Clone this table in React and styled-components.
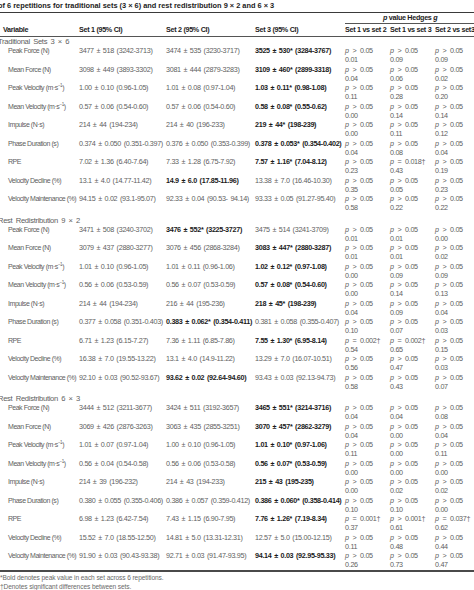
import React from "react";
import styled, { createGlobalStyle } from "styled-components";

const SANS = `"Liberation Sans Narrow", "Arial Narrow", "Liberation Sans", Arial, sans-serif`;

const GlobalStyle = createGlobalStyle`
  html, body {
    margin: 0;
    padding: 0;
    background: #ffffff;
  }
  body {
    width: 474px;
    height: 590px;
    overflow: hidden;
  }
`;

const LABELS = [
  "Peak Force (N)",
  "Mean Force (N)",
  <>
    Peak Velocity (m·s<sup>−1</sup>)
  </>,
  <>
    Mean Velocity (m·s<sup>−1</sup>)
  </>,
  "Impulse (N·s)",
  "Phase Duration (s)",
  "RPE",
  "Velocity Decline (%)",
  "Velocity Maintenance (%)",
];

const NS = "> 0.05";

// each row: sets, index of bold set (-1 none), p values, hedges g
const GROUPS = [
  {
    title: "Traditional Sets 3 × 6",
    first: true,
    rows: [
      { sets: ["3477 ± 518 (3242-3713)", "3474 ± 535 (3230-3717)", "3525 ± 530* (3284-3767)"], bold: 2, g: ["0.01", "0.09", "0.09"] },
      { sets: ["3098 ± 449 (3893-3302)", "3081 ± 444 (2879-3283)", "3109 ± 460* (2899-3318)"], bold: 2, g: ["0.04", "0.06", "0.02"] },
      { sets: ["1.00 ± 0.10 (0.96-1.05)", "1.01 ± 0.08 (0.97-1.04)", "1.03 ± 0.11* (0.98-1.08)"], bold: 2, g: ["0.11", "0.28", "0.20"] },
      { sets: ["0.57 ± 0.06 (0.54-0.60)", "0.57 ± 0.06 (0.54-0.60)", "0.58 ± 0.08* (0.55-0.62)"], bold: 2, g: ["0.00", "0.14", "0.14"] },
      { sets: ["214 ± 44 (194-234)", "214 ± 40 (196-233)", "219 ± 44* (198-239)"], bold: 2, g: ["0.00", "0.11", "0.12"] },
      { sets: ["0.374 ± 0.050 (0.351-0.397)", "0.376 ± 0.050 (0.353-0.399)", "0.378 ± 0.053* (0.354-0.402)"], bold: 2, g: ["0.04", "0.08", "0.04"] },
      { sets: ["7.02 ± 1.36 (6.40-7.64)", "7.33 ± 1.28 (6.75-7.92)", "7.57 ± 1.16* (7.04-8.12)"], bold: 2, p: [NS, "= 0.018†", NS], g: ["0.23", "0.43", "0.19"] },
      { sets: ["13.1 ± 4.0 (14.77-11.42)", "14.9 ± 6.0 (17.85-11.96)", "13.38 ± 7.0 (16.46-10.30)"], bold: 1, g: ["0.35", "0.05", "0.23"] },
      { sets: ["94.15 ± 0.02 (93.1-95.07)", "92.33 ± 0.04 (90.53- 94.14)", "93.33 ± 0.05 (91.27-95.40)"], bold: -1, g: ["0.58", "0.22", "0.22"] },
    ],
  },
  {
    title: "Rest Redistribution 9 × 2",
    rows: [
      { sets: ["3471 ± 508 (3240-3702)", "3476 ± 552* (3225-3727)", "3475 ± 514 (3241-3709)"], bold: 1, g: ["0.01", "0.01", "0.00"] },
      { sets: ["3079 ± 437 (2880-3277)", "3076 ± 456 (2868-3284)", "3083 ± 447* (2880-3287)"], bold: 2, g: ["0.01", "0.01", "0.02"] },
      { sets: ["1.01 ± 0.10 (0.96-1.05)", "1.01 ± 0.11 (0.96-1.06)", "1.02 ± 0.12* (0.97-1.08)"], bold: 2, g: ["0.00", "0.09", "0.09"] },
      { sets: ["0.56 ± 0.06 (0.53-0.59)", "0.56 ± 0.07 (0.53-0.59)", "0.57 ± 0.08* (0.54-0.60)"], bold: 2, g: ["0.00", "0.14", "0.13"] },
      { sets: ["214 ± 44 (194-234)", "216 ± 44 (195-236)", "218 ± 45* (198-239)"], bold: 2, g: ["0.04", "0.09", "0.04"] },
      { sets: ["0.377 ± 0.058 (0.351-0.403)", "0.383 ± 0.062* (0.354-0.411)", "0.381 ± 0.058 (0.355-0.407)"], bold: 1, g: ["0.10", "0.07", "0.03"] },
      { sets: ["6.71 ± 1.23 (6.15-7.27)", "7.36 ± 1.11 (6.85-7.86)", "7.55 ± 1.30* (6.95-8.14)"], bold: 2, p: ["= 0.002†", "= 0.002†", NS], g: ["0.54", "0.65", "0.15"] },
      { sets: ["16.38 ± 7.0 (19.55-13.22)", "13.1 ± 4.0 (14.9-11.22)", "13.29 ± 7.0 (16.07-10.51)"], bold: -1, g: ["0.56", "0.47", "0.03"] },
      { sets: ["92.10 ± 0.03 (90.52-93.67)", "93.62 ± 0.02 (92.64-94.60)", "93.43 ± 0.03 (92.13-94.73)"], bold: 1, g: ["0.58", "0.43", "0.07"] },
    ],
  },
  {
    title: "Rest Redistribution 6 × 3",
    rows: [
      { sets: ["3444 ± 512 (3211-3677)", "3424 ± 511 (3192-3657)", "3465 ± 551* (3214-3716)"], bold: 2, g: ["0.04", "0.04", "0.08"] },
      { sets: ["3069 ± 426 (2876-3263)", "3063 ± 435 (2855-3251)", "3070 ± 457* (2862-3279)"], bold: 2, g: ["0.04", "0.00", "0.04"] },
      { sets: ["1.01 ± 0.07 (0.97-1.04)", "1.00 ± 0.10 (0.96-1.05)", "1.01 ± 0.10* (0.97-1.06)"], bold: 2, g: ["0.11", "0.00", "0.11"] },
      { sets: ["0.56 ± 0.04 (0.54-0.58)", "0.56 ± 0.06 (0.53-0.58)", "0.56 ± 0.07* (0.53-0.59)"], bold: 2, g: ["0.00", "0.00", "0.00"] },
      { sets: ["214 ± 39 (196-232)", "214 ± 43 (194-233)", "215 ± 43 (195-235)"], bold: 2, g: ["0.00", "0.02", "0.02"] },
      { sets: ["0.380 ± 0.055 (0.355-0.406)", "0.386 ± 0.057 (0.359-0.412)", "0.386 ± 0.060* (0.358-0.414)"], bold: 2, g: ["0.10", "0.10", "0.00"] },
      { sets: ["6.98 ± 1.23 (6.42-7.54)", "7.43 ± 1.15 (6.90-7.95)", "7.76 ± 1.26* (7.19-8.34)"], bold: 2, p: ["= 0.001†", "> 0.001†", "= 0.037†"], g: ["0.37", "0.61", "0.62"] },
      { sets: ["15.52 ± 7.0 (18.55-12.50)", "14.81 ± 5.0 (13.31-12.31)", "12.57 ± 5.0 (15.00-12.15)"], bold: -1, g: ["0.11", "0.48", "0.44"] },
      { sets: ["91.90 ± 0.03 (90.43-93.38)", "92.71 ± 0.03 (91.47-93.95)", "94.14 ± 0.03 (92.95-95.33)"], bold: 2, g: ["0.26", "0.73", "0.47"] },
    ],
  },
];

function App() {
  return (
    <>
      <GlobalStyle />
      <Page>
        <Title>
          of 6 repetitions for traditional sets (3 × 6) and rest redistribution 9 × 2 and 6 × 3
        </Title>
        <Table>
          <colgroup>
            <col style={{ width: 81 }} />
            <col style={{ width: 87 }} />
            <col style={{ width: 89 }} />
            <col style={{ width: 90 }} />
            <col style={{ width: 45 }} />
            <col style={{ width: 45 }} />
            <col style={{ width: 60 }} />
          </colgroup>
          <thead>
            <tr>
              <SpanHead colSpan={4} />
              <SpanHead colSpan={3} $rule>
                <i>p</i> value Hedges <i>g</i>
              </SpanHead>
            </tr>
            <tr>
              <HeadCell $indent={5}>Variable</HeadCell>
              <HeadCell>Set 1 (95% CI)</HeadCell>
              <HeadCell>Set 2 (95% CI)</HeadCell>
              <HeadCell>Set 3 (95% CI)</HeadCell>
              <HeadCell>Set 1 vs set 2</HeadCell>
              <HeadCell>Set 1 vs set 3</HeadCell>
              <HeadCell>Set 2 vs set3</HeadCell>
            </tr>
          </thead>
          <tbody>
            {GROUPS.map((group) => (
              <React.Fragment key={group.title}>
                <tr>
                  <GroupCell colSpan={7} $first={group.first}>
                    {group.title}
                  </GroupCell>
                </tr>
                {group.rows.map((row, i) => (
                  <tr key={i}>
                    <LabelCell>{LABELS[i]}</LabelCell>
                    {row.sets.map((value, j) => (
                      <ValueCell key={j} $bold={row.bold === j}>
                        {value}
                      </ValueCell>
                    ))}
                    {row.g.map((g, j) => (
                      <PCell key={j}>
                        <i>p</i> {(row.p && row.p[j]) || NS}
                        <br />
                        {g}
                      </PCell>
                    ))}
                  </tr>
                ))}
              </React.Fragment>
            ))}
          </tbody>
        </Table>
        <Notes>
          <div>*Bold denotes peak value in each set across 6 repetitions.</div>
          <div>†Denotes significant differences between sets.</div>
        </Notes>
      </Page>
    </>
  );
}

const Page = styled.div`
  width: 474px;
  height: 590px;
  overflow: hidden;
  background: #ffffff;
  color: #5e5e5e;
  font-family: ${SANS};
`;

const Title = styled.div`
  margin-left: -2px;
  height: 12px;
  line-height: 12px;
  font-size: 7.4px;
  font-weight: bold;
  color: #1c1c1c;
  white-space: nowrap;
`;

const Table = styled.table`
  margin-left: -2px;
  width: 497px;
  table-layout: fixed;
  border-collapse: collapse;
  border-top: 1.5px solid #3a3a3a;
  border-bottom: 2px solid #4a4a4a;
  font-size: 7.2px;
  letter-spacing: -0.3px;

  td,
  th {
    padding: 0;
    white-space: nowrap;
    overflow: visible;
    text-align: left;
    font-weight: normal;
  }

  sup {
    font-size: 4.6px;
    line-height: 0;
    vertical-align: 3px;
  }
`;

const SpanHead = styled.th`
  height: 10px;
  line-height: 10px;
  vertical-align: middle;
  color: #1c1c1c;
  border-bottom: ${(p) => (p.$rule ? "1px solid #555" : "none")};
  && {
    padding-left: 38px;
    text-align: left;
    font-weight: bold;
  }
`;

const HeadCell = styled.th`
  height: 12px;
  line-height: 12px;
  vertical-align: middle;
  color: #1c1c1c;
  border-bottom: 1px solid #555;
  && {
    padding-left: ${(p) => p.$indent || 0}px;
    font-weight: bold;
  }
`;

const GroupCell = styled.td`
  height: ${(p) => (p.$first ? 9 : 12)}px;
  line-height: 9px;
  vertical-align: ${(p) => (p.$first ? "middle" : "bottom")};
  font-size: 7.6px;
  word-spacing: 1.5px;
  color: #5e5e5e;
`;

const LabelCell = styled.td`
  height: 18.5px;
  line-height: 9.25px;
  vertical-align: top;
  font-size: 7px;
  letter-spacing: -0.45px;
  && {
    padding-left: 10px;
  }
`;

const ValueCell = styled.td`
  line-height: 9.25px;
  vertical-align: top;
  word-spacing: 1px;
  color: ${(p) => (p.$bold ? "#1a1a1a" : "#5e5e5e")};
  && {
    font-weight: ${(p) => (p.$bold ? "bold" : "normal")};
  }
`;

const PCell = styled.td`
  line-height: 9.25px;
  vertical-align: top;
  word-spacing: 2px;
`;

const Notes = styled.div`
  padding-top: 1px;
  font-size: 6.6px;
  letter-spacing: -0.1px;
  line-height: 9.5px;
  color: #6a6a6a;
  white-space: nowrap;
`;

export default App;
